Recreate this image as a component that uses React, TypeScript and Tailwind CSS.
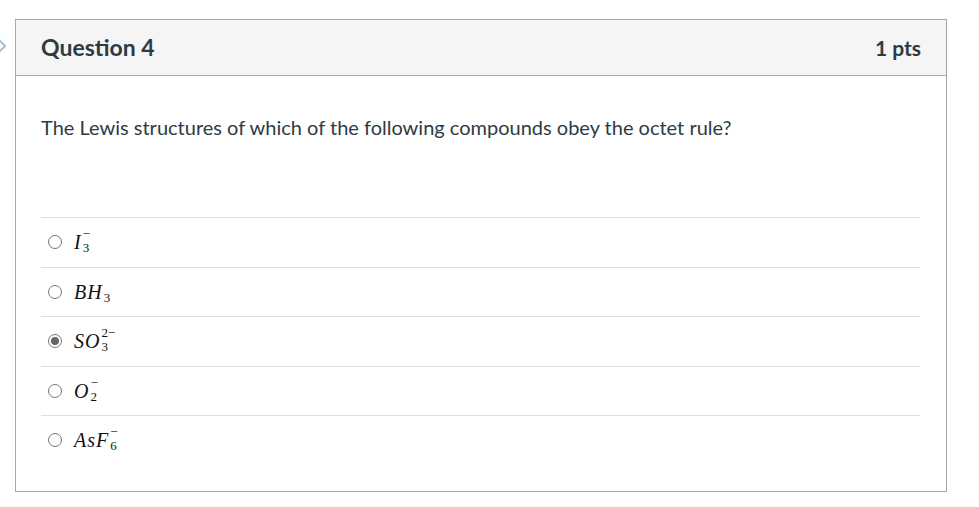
import type { ReactNode } from "react";

type Option = { id: string; label: ReactNode; checked?: boolean };

function Chem({ base, sub, sup }: { base: string; sub?: string; sup?: string }) {
  return (
    <span
      className="inline-flex items-center italic text-[20px] leading-[20px] tracking-[1px] text-[#111]"
      style={{ fontFamily: '"Liberation Serif", serif' }}
    >
      <span>{base}</span>
      <span className="ml-[1px] inline-flex flex-col not-italic tracking-normal text-[13px] leading-[12px]">
        <span className="h-[12px] -mt-[2px]">{sup ?? ""}</span>
        <span className="h-[12px] mt-[2px]">{sub}</span>
      </span>
    </span>
  );
}

const options: Option[] = [
  { id: "a", label: <Chem base="I" sub="3" sup="−" /> },
  { id: "b", label: <Chem base="BH" sub="3" /> },
  { id: "c", label: <Chem base="SO" sub="3" sup="2−" />, checked: true },
  { id: "d", label: <Chem base="O" sub="2" sup="−" /> },
  { id: "e", label: <Chem base="AsF" sub="6" sup="−" /> },
];

function Radio({ checked }: { checked?: boolean }) {
  return (
    <span className="flex h-[14px] w-[14px] items-center justify-center rounded-full border border-[#777] bg-white">
      {checked && <span className="h-[8px] w-[8px] rounded-full bg-[#666]" />}
    </span>
  );
}

export default function App() {
  return (
    <div className="relative h-[507px] w-[979px] bg-white" style={{ fontFamily: "Lato, sans-serif" }}>
      <svg className="absolute left-0 top-[39px]" width="6" height="14" viewBox="0 0 6 14">
        <path d="M-1 1 L5 7 L-1 13" fill="none" stroke="#a9c1d3" strokeWidth="2" />
      </svg>
      <div className="pl-[15px] pt-[19px]">
        <div className="h-[473px] w-[932px] border border-[#a8a8a8]">
          <div className="flex h-[56px] items-center justify-between border-b border-[#a8a8a8] bg-[#f5f5f5] pl-[25px] pr-[25px]">
            <span className="text-[23px] font-bold text-[#2d3b45]">Question 4</span>
            <span className="text-[21px] font-bold text-[#2d3b45]">1 pts</span>
          </div>
          <div className="px-[25px]">
            <p className="pt-[38px] text-[20px] leading-[26px] text-[#2d3b45]">
              The Lewis structures of which of the following compounds obey the octet rule?
            </p>
            <div className="mt-[77px] w-[879px]">
              {options.map((o) => (
                <div key={o.id} className="flex h-[49.5px] items-center gap-[12px] border-t border-[#e0e0e0] pl-[7px]">
                  <Radio checked={o.checked} />
                  {o.label}
                </div>
              ))}
            </div>
          </div>
        </div>
      </div>
    </div>
  );
}
